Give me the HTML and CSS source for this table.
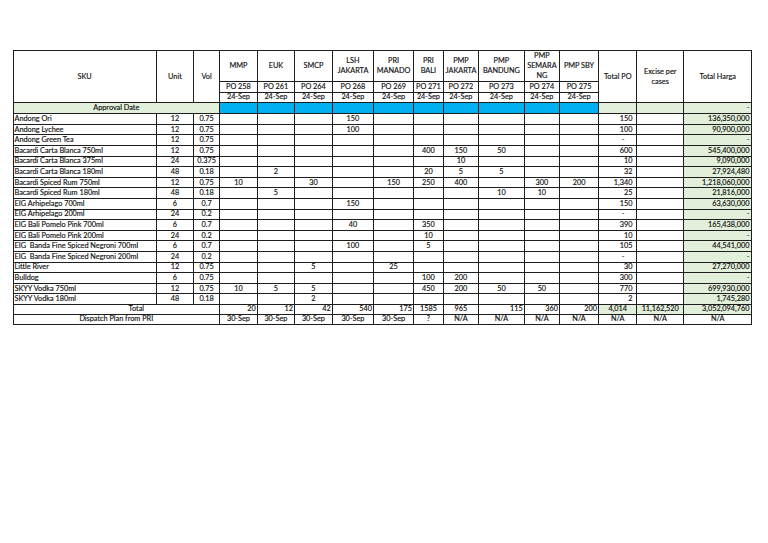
FILE: index.html
```html
<!DOCTYPE html>
<html>
<head>
<meta charset="utf-8">
<link rel="stylesheet" href="styles.css">
</head>
<body>
<div class="sheet">
<table class="grid">
<colgroup>
<col class="w-sku"><col class="w-unit"><col class="w-vol">
<col class="w-mmp"><col class="w-euk"><col class="w-smcp"><col class="w-lsh"><col class="w-man"><col class="w-bali"><col class="w-jak"><col class="w-band"><col class="w-sem"><col class="w-sby">
<col class="w-tpo"><col class="w-exc"><col class="w-th">
</colgroup>
<tbody>
<tr class="r-head">
<td rowspan="3" class="c">SKU</td><td rowspan="3" class="c">Unit</td><td rowspan="3" class="c">Vol</td>
<td class="c">MMP</td><td class="c">EUK</td><td class="c">SMCP</td><td class="c">LSH<br>JAKARTA</td><td class="c">PRI<br>MANADO</td><td class="c">PRI<br>BALI</td><td class="c">PMP<br>JAKARTA</td><td class="c">PMP<br>BANDUNG</td><td class="c">PMP<br>SEMARA<br>NG</td><td class="c">PMP SBY</td>
<td rowspan="3" class="c">Total PO</td><td rowspan="3" class="c">Excise per<br>cases</td><td rowspan="3" class="c">Total Harga</td>
</tr>
<tr class="r-po">
<td class="c">PO 258</td><td class="c">PO 261</td><td class="c">PO 264</td><td class="c">PO 268</td><td class="c">PO 269</td><td class="c">PO 271</td><td class="c">PO 272</td><td class="c">PO 273</td><td class="c">PO 274</td><td class="c">PO 275</td>
</tr>
<tr class="r-date">
<td class="c">24-Sep</td><td class="c">24-Sep</td><td class="c">24-Sep</td><td class="c">24-Sep</td><td class="c">24-Sep</td><td class="c">24-Sep</td><td class="c">24-Sep</td><td class="c">24-Sep</td><td class="c">24-Sep</td><td class="c">24-Sep</td>
</tr>
<tr class="r-appr">
<td colspan="3" class="c green">Approval Date</td>
<td class="blue"></td><td class="blue"></td><td class="blue"></td><td class="blue"></td><td class="blue"></td><td class="blue"></td><td class="blue"></td><td class="blue"></td><td class="blue"></td><td class="blue"></td>
<td class="green"></td><td class="green"></td><td class="green r th">-</td>
</tr>
<tr><td class="l">Andong Ori</td><td class="c">12</td><td class="c">0.75</td><td></td><td></td><td></td><td class="c">150</td><td></td><td></td><td></td><td></td><td></td><td></td><td class="r tp">150</td><td></td><td class="green r th">136,350,000</td></tr>
<tr><td class="l">Andong Lychee</td><td class="c">12</td><td class="c">0.75</td><td></td><td></td><td></td><td class="c">100</td><td></td><td></td><td></td><td></td><td></td><td></td><td class="r tp">100</td><td></td><td class="green r th">90,900,000</td></tr>
<tr><td class="l">Andong Green Tea</td><td class="c">12</td><td class="c">0.75</td><td></td><td></td><td></td><td></td><td></td><td></td><td></td><td></td><td></td><td></td><td class="r tp dash">-</td><td></td><td class="green r th">-</td></tr>
<tr><td class="l">Bacardi Carta Blanca 750ml</td><td class="c">12</td><td class="c">0.75</td><td></td><td></td><td></td><td></td><td></td><td class="c">400</td><td class="c">150</td><td class="c">50</td><td></td><td></td><td class="r tp">600</td><td></td><td class="green r th">545,400,000</td></tr>
<tr><td class="l">Bacardi Carta Blanca 375ml</td><td class="c">24</td><td class="c">0.375</td><td></td><td></td><td></td><td></td><td></td><td></td><td class="c">10</td><td></td><td></td><td></td><td class="r tp">10</td><td></td><td class="green r th">9,090,000</td></tr>
<tr><td class="l">Bacardi Carta Blanca 180ml</td><td class="c">48</td><td class="c">0.18</td><td></td><td class="c">2</td><td></td><td></td><td></td><td class="c">20</td><td class="c">5</td><td class="c">5</td><td></td><td></td><td class="r tp">32</td><td></td><td class="green r th">27,924,480</td></tr>
<tr><td class="l">Bacardi Spiced Rum 750ml</td><td class="c">12</td><td class="c">0.75</td><td class="c">10</td><td></td><td class="c">30</td><td></td><td class="c">150</td><td class="c">250</td><td class="c">400</td><td></td><td class="c">300</td><td class="c">200</td><td class="r tp">1,340</td><td></td><td class="green r th">1,218,060,000</td></tr>
<tr><td class="l">Bacardi Spiced Rum 180ml</td><td class="c">48</td><td class="c">0.18</td><td></td><td class="c">5</td><td></td><td></td><td></td><td></td><td></td><td class="c">10</td><td class="c">10</td><td></td><td class="r tp">25</td><td></td><td class="green r th">21,816,000</td></tr>
<tr><td class="l">EIG Arhipelago 700ml</td><td class="c">6</td><td class="c">0.7</td><td></td><td></td><td></td><td class="c">150</td><td></td><td></td><td></td><td></td><td></td><td></td><td class="r tp">150</td><td></td><td class="green r th">63,630,000</td></tr>
<tr><td class="l">EIG Arhipelago 200ml</td><td class="c">24</td><td class="c">0.2</td><td></td><td></td><td></td><td></td><td></td><td></td><td></td><td></td><td></td><td></td><td class="r tp dash">-</td><td></td><td class="green r th">-</td></tr>
<tr><td class="l">EIG Bali Pomelo Pink 700ml</td><td class="c">6</td><td class="c">0.7</td><td></td><td></td><td></td><td class="c">40</td><td></td><td class="c">350</td><td></td><td></td><td></td><td></td><td class="r tp">390</td><td></td><td class="green r th">165,438,000</td></tr>
<tr><td class="l">EIG Bali Pomelo Pink 200ml</td><td class="c">24</td><td class="c">0.2</td><td></td><td></td><td></td><td></td><td></td><td class="c">10</td><td></td><td></td><td></td><td></td><td class="r tp">10</td><td></td><td class="green r th">-</td></tr>
<tr><td class="l">EIG&nbsp; Banda Fine Spiced Negroni 700ml</td><td class="c">6</td><td class="c">0.7</td><td></td><td></td><td></td><td class="c">100</td><td></td><td class="c">5</td><td></td><td></td><td></td><td></td><td class="r tp">105</td><td></td><td class="green r th">44,541,000</td></tr>
<tr><td class="l">EIG&nbsp; Banda Fine Spiced Negroni 200ml</td><td class="c">24</td><td class="c">0.2</td><td></td><td></td><td></td><td></td><td></td><td></td><td></td><td></td><td></td><td></td><td class="r tp dash">-</td><td></td><td class="green r th">-</td></tr>
<tr><td class="l">Little River</td><td class="c">12</td><td class="c">0.75</td><td></td><td></td><td class="c">5</td><td></td><td class="c">25</td><td></td><td></td><td></td><td></td><td></td><td class="r tp">30</td><td></td><td class="green r th">27,270,000</td></tr>
<tr><td class="l">Bulldog</td><td class="c">6</td><td class="c">0.75</td><td></td><td></td><td></td><td></td><td></td><td class="c">100</td><td class="c">200</td><td></td><td></td><td></td><td class="r tp">300</td><td></td><td class="green r th">-</td></tr>
<tr><td class="l">SKYY Vodka 750ml</td><td class="c">12</td><td class="c">0.75</td><td class="c">10</td><td class="c">5</td><td class="c">5</td><td></td><td></td><td class="c">450</td><td class="c">200</td><td class="c">50</td><td class="c">50</td><td></td><td class="r tp">770</td><td></td><td class="green r th">699,930,000</td></tr>
<tr><td class="l">SKYY Vodka 180ml</td><td class="c">48</td><td class="c">0.18</td><td></td><td></td><td class="c">2</td><td></td><td></td><td></td><td></td><td></td><td></td><td></td><td class="r tp">2</td><td></td><td class="green r th">1,745,280</td></tr>
<tr class="r-total">
<td colspan="3" class="c total-label">Total</td>
<td class="r">20</td><td class="r">12</td><td class="r">42</td><td class="r">540</td><td class="r">175</td><td class="c">1585</td><td class="c">965</td><td class="r">115</td><td class="r">360</td><td class="r">200</td>
<td class="green c">4,014</td><td class="green c">11,162,520</td><td class="green r th">3,052,094,760</td>
</tr>
<tr class="r-total">
<td colspan="3" class="c">Dispatch Plan from PRI</td>
<td class="c">30-Sep</td><td class="c">30-Sep</td><td class="c">30-Sep</td><td class="c">30-Sep</td><td class="c">30-Sep</td><td class="c">?</td><td class="c">N/A</td><td class="c">N/A</td><td class="c">N/A</td><td class="c">N/A</td>
<td class="c">N/A</td><td class="c">N/A</td><td class="c">N/A</td>
</tr>
</tbody>
</table>
</div>
</body>
</html>
```
FILE: styles.css
```css
html, body {
  margin: 0;
  padding: 0;
  background: #ffffff;
}
.sheet {
  padding: 50px 0 0 12.5px;
}
.grid {
  border-collapse: collapse;
  table-layout: fixed;
  width: 739px;
  font-family: Lato, "Liberation Sans", sans-serif;
  font-size: 7.3px;
  color: #111111;
  -webkit-text-stroke: 0.15px #111111;
}
.grid td {
  border: 1px solid #1e1e1e;
  padding: 0 1px;
  height: 9.6px;
  line-height: 8px;
  white-space: nowrap;
  overflow: hidden;
  vertical-align: middle;
}
.w-sku { width: 143.3px; }
.w-unit { width: 37.3px; }
.w-vol { width: 26px; }
.w-mmp { width: 37.7px; }
.w-euk { width: 37.3px; }
.w-smcp { width: 37.7px; }
.w-lsh { width: 41.3px; }
.w-man { width: 40px; }
.w-bali { width: 29.7px; }
.w-jak { width: 35.3px; }
.w-band { width: 45.7px; }
.w-sem { width: 35.3px; }
.w-sby { width: 39px; }
.w-tpo { width: 38.4px; }
.w-exc { width: 46.6px; }
.w-th { width: 68.4px; }

.grid tr.r-head td { height: 30px; line-height: 10px; }
.grid tr.r-po td { height: 9.7px; }
.grid tr.r-date td { height: 9.6px; }
.grid tr.r-appr td { height: 10px; }
.grid tr.r-total td { height: 9px; }

.c { text-align: center; }
.l { text-align: left; }
.r { text-align: right; }
.grid td.tp { padding-right: 4px; }
.grid td.tp.dash { padding-right: 12px; }
.grid td.th { padding-right: 2px; }
.green { background: #e2efda; }
.blue { background: #00b0f0; }
.total-label { text-indent: 40px; }
```
